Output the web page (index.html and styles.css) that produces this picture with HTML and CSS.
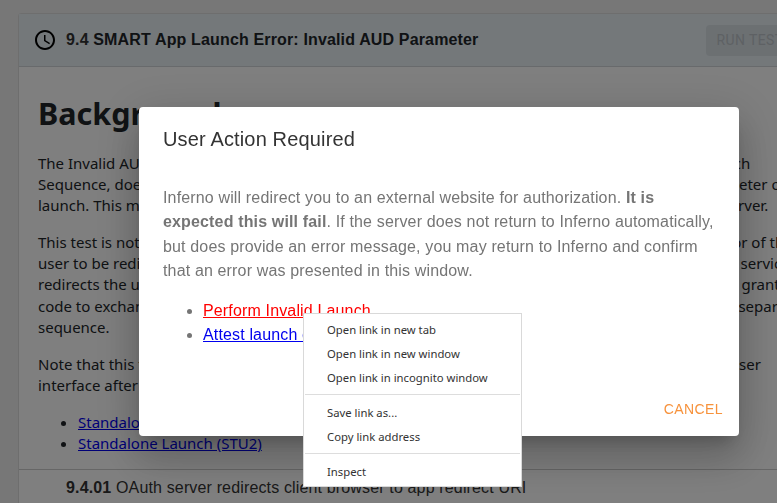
FILE: index.html
```html
<!DOCTYPE html>
<html lang="en">
<head>
	<meta charset="UTF-8">
	<title>SMART App Launch Error</title>
	<link rel="stylesheet" href="styles.css">
</head>
<body>
	<div class="card">
		<div class="card-head">
			<svg class="clock" width="24" height="24" viewBox="0 0 24 24">
				<path d="M11.99 2C6.47 2 2 6.48 2 12s4.47 10 9.99 10C17.52 22 22 17.52 22 12S17.52 2 11.99 2zM12 20c-4.42 0-8-3.58-8-8s3.58-8 8-8 8 3.58 8 8-3.58 8-8 8z"/>
				<path d="M12.5 7H11v6l5.25 3.15.75-1.23-4.5-2.67z"/>
			</svg>
			<span class="card-title"><span>9.4</span> SMART App Launch Error: Invalid AUD Parameter</span>
			<button class="run-btn">RUN TESTS</button>
		</div>
		<div class="card-body">
			<h1>Background</h1>
			<p>The Invalid AUD Sequence verifies that a server rejects a bad audience during the SMART App Launch<br>
			Sequence, does not continue with the launches, and then reports an error for the wrong aud parameter of<br>
			launch. This may be shown to the end user directly or it can now be handled by the authorization server.</p>
			<p>This test is not automated because this requires the human testers to manually confirm the behavior of the<br>
			user to be redirected to the authorization server, and it then notes that only when the authorization service<br>
			redirects the users back to the original client applications without ever first issuing an authorization grant<br>
			code to exchange for any access tokens, the launch has failed and this should therefore be run as a separate<br>
			sequence.</p>
			<p>Note that this test requires the server to display clearly visible and readable error messages in the user<br>
			interface after the launch has been attempted.</p>
			<ul>
				<li><a href="#">Standalone Launch (STU1)</a></li>
				<li><a href="#">Standalone Launch (STU2)</a></li>
			</ul>
		</div>
		<div class="test-row"><b>9.4.01</b> OAuth server redirects client browser to app redirect URI</div>
	</div>

	<div class="overlay">
		<div class="dialog">
			<h2>User Action Required</h2>
			<div class="dialog-text">
				<p>Inferno will redirect you to an external website for authorization. <b>It is expected this will fail</b>. If the server does not return to Inferno automatically, but does provide an error message, you may return to Inferno and confirm that an error was presented in this window.</p>
				<ul>
					<li><a class="red" href="#">Perform Invalid Launch</a></li>
					<li><a class="blue" href="#">Attest launch error</a></li>
				</ul>
			</div>
			<div class="dialog-actions"><button class="cancel">CANCEL</button></div>
		</div>
	</div>

	<div class="menu">
		<div class="menu-item">Open link in new tab</div>
		<div class="menu-item">Open link in new window</div>
		<div class="menu-item">Open link in incognito window</div>
		<div class="menu-sep"></div>
		<div class="menu-item">Save link as...</div>
		<div class="menu-item">Copy link address</div>
		<div class="menu-sep"></div>
		<div class="menu-item">Inspect</div>
	</div>
</body>
</html>
```

FILE: styles.css
```css
* {
	margin: 0;
	padding: 0;
	box-sizing: border-box;
}
html, body {
	height: 100%;
	overflow: hidden;
}
body {
	background-color: #eee;
	font-family: "Noto Sans", sans-serif;
	color: #212529;
}
.card {
	width: 820px;
	margin: 13px 0 0 18px;
	background-color: #fff;
	border: 1px solid #ddd;
	border-radius: 3px;
}
.card-head {
	display: flex;
	align-items: center;
	height: 53px;
	padding: 0 14px;
	background-color: #e8f0f5;
	border-bottom: 1px solid #d0d4d8;
	font-family: "Liberation Sans", sans-serif;
}
.clock {
	flex: none;
	margin-right: 9px;
}
.card-title {
	font-size: 16px;
	font-weight: bold;
	letter-spacing: .15px;
	white-space: nowrap;
}
.card-title span {
	color: #333;
}
.run-btn {
	width: 110px;
	height: 31px;
	margin-left: 228px;
	border: 0;
	border-radius: 4px;
	background-color: #d8e0e5;
	color: #bcc3c8;
	font-family: Roboto, sans-serif;
	font-size: 14px;
	letter-spacing: .4px;
	text-align: left;
	padding-left: 10px;
}
.card-body {
	padding: 24px 19px 15px;
	font-size: 15px;
	line-height: 21.1px;
	white-space: nowrap;
}
.card-body h1 {
	font-size: 30.5px;
	line-height: 44px;
	font-weight: bold;
	margin-bottom: 18px;
}
.card-body p {
	margin-bottom: 16px;
}
.card-body ul {
	padding-left: 40px;
}
.card-body a {
	color: #00e;
}
.test-row {
	padding: 9px 47px;
	border-top: 1px solid #ccc;
	font-family: "Liberation Sans", sans-serif;
	font-size: 16px;
	letter-spacing: .15px;
	color: #333;
	white-space: nowrap;
}
.overlay {
	position: fixed;
	top: 0;
	left: 0;
	right: 0;
	bottom: 0;
	padding: 107px 0 0 139px;
	background-color: rgba(0, 0, 0, .5);
}
.dialog {
	width: 600px;
	height: 329px;
	background-color: #fff;
	border-radius: 4px;
	font-family: "Liberation Sans", sans-serif;
	box-shadow: 0 11px 15px -7px rgba(0, 0, 0, .2), 0 24px 38px 3px rgba(0, 0, 0, .14), 0 9px 46px 8px rgba(0, 0, 0, .12);
	display: flex;
	flex-direction: column;
}
.dialog h2 {
	padding: 16px 24px;
	font-size: 20px;
	font-weight: normal;
	line-height: 32px;
	letter-spacing: .15px;
	color: #333;
}
.dialog-text {
	flex: 1;
	padding: 15px 24px 0;
	font-size: 16px;
	line-height: 24.4px;
	letter-spacing: .15px;
	color: #757575;
}
.dialog-text ul {
	margin-top: 15px;
	padding-left: 40px;
}
.dialog-text .red {
	color: #f00;
}
.dialog-text .blue {
	color: #00e;
}
.dialog-actions {
	display: flex;
	justify-content: flex-end;
	padding: 8px;
}
.cancel {
	margin-bottom: 1px;
	padding: 6px 8px;
	border: 0;
	background: none;
	color: #f7923c;
	font-family: "Liberation Sans", sans-serif;
	font-size: 14px;
	line-height: 24px;
	letter-spacing: .4px;
}
.menu {
	position: absolute;
	left: 303px;
	top: 313px;
	width: 219px;
	height: 174px;
	padding-top: 4px;
	background-color: #fff;
	border: 1px solid #d9d9d9;
	font-size: 11.3px;
	color: #333;
}
.menu-item {
	height: 24px;
	line-height: 23px;
	padding-left: 23px;
	white-space: nowrap;
}
.menu-sep {
	height: 1px;
	margin: 4px 1px 6px;
	background-color: #ddd;
}
```
